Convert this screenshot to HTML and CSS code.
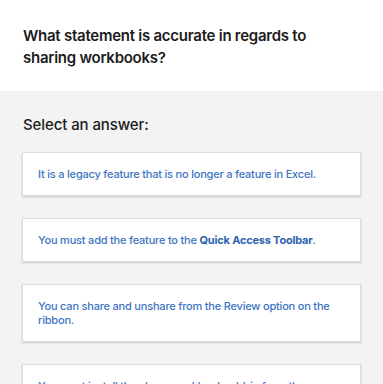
FILE: index.html
```html
<!DOCTYPE html>
<html lang="en">
<head>
    <meta charset="UTF-8">
    <meta name="viewport" content="width=device-width, initial-scale=1.0">
    <title>Quiz Question</title>
    <link rel="stylesheet" href="styles.css">
</head>
<body>
    <div class="question-header">
        What statement is accurate in regards to sharing workbooks?
    </div>
    <div class="answers">
        <div class="answers-title">Select an answer:</div>
        <div class="answer-list">
            <div class="answer-card">It is a legacy feature that is no longer a feature in Excel.</div>
            <div class="answer-card">You must add the feature to the <strong>Quick Access Toolbar</strong>.</div>
            <div class="answer-card">You can share and unshare from the Review option on the ribbon.</div>
            <div class="answer-card">You must install the share-workbook add-in from the store.</div>
        </div>
    </div>
</body>
</html>
```

FILE: styles.css
```css
body, html {
    margin: 0;
    padding: 0;
    background-color: #f3f3f3;
    font-family: 'Inter', 'Noto Sans', sans-serif;
}
.question-header {
    background-color: #FFFFFF;
    padding: 25px 60px 22px 23px;
    font-size: 15px;
    line-height: 22px;
    font-weight: 600;
    letter-spacing: -0.25px;
    color: #1c1c1c;
}
.answers {
    padding: 23px 22px 22px 22px;
}
.answers-title {
    font-size: 15px;
    line-height: 22px;
    font-weight: 500;
    letter-spacing: -0.1px;
    color: #1c1c1c;
    margin-left: 1px;
}
.answer-list {
    display: flex;
    flex-direction: column;
    gap: 22px;
    margin-top: 16px;
}
.answer-card {
    background-color: #FFFFFF;
    border: 1px solid #dcdcdc;
    box-shadow: 0 1px 2px rgba(0, 0, 0, 0.18);
    padding: 14px 30px 14px 15px;
    font-size: 11px;
    line-height: 14px;
    font-weight: 500;
    letter-spacing: -0.2px;
    color: #3c74c2; /* answer text colour */
}
.answer-card strong {
    font-weight: 700;
    color: #2d63b0;
}
```
